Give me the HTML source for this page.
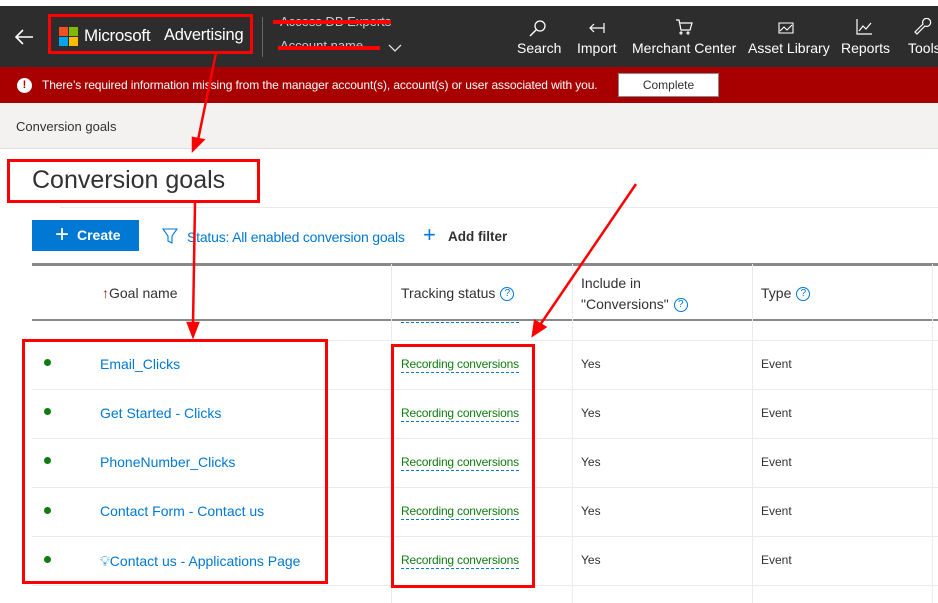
<!DOCTYPE html>
<html><head><meta charset="utf-8"><style>
*{margin:0;padding:0;box-sizing:border-box}
body{width:938px;height:603px;overflow:hidden;background:#fff;font-family:"Liberation Sans",sans-serif;position:relative;color:#323130}
.a{position:absolute}
.hdr{left:0;top:6px;width:938px;height:61px;background:#2d2d2d}
.nav{color:#fff;font-size:14px;text-align:center;top:40px}
.ban{left:0;top:67px;width:938px;height:36px;background:#a80000}
.bc{left:0;top:103px;width:938px;height:46px;background:#f3f2f1;border-bottom:1px solid #e1dfdd}
.hl{height:1px;background:#edebe9;left:32px;width:906px}
.vl{width:1px;background:#edebe9;top:264px;height:339px}
.dot{width:7px;height:7px;border-radius:50%;background:#107c10;left:44px}
.gn{left:100px;color:#0078d4;font-size:14px}
.rc{left:401px;color:#107c10;font-size:12px;border-bottom:1px dashed #0078d4;line-height:15px;letter-spacing:-0.2px}
.yes{left:581px;font-size:12px}
.ev{left:761px;font-size:12px}
.rb{border:3px solid #f00}
.q{display:inline-block;width:14px;height:14px;border:1px solid #0078d4;border-radius:50%;color:#0078d4;font-size:10px;line-height:12px;text-align:center;vertical-align:middle;margin-left:5px}
</style></head><body>
<div class="a hdr"></div>
<svg class="a" style="left:14px;top:28px" width="20" height="18"><path d="M19 9H2M9 2L2 9l7 7" stroke="#fff" stroke-width="1.6" fill="none"/></svg>
<div class="a" style="left:59px;top:27px;width:9px;height:9px;background:#f25022"></div>
<div class="a" style="left:69px;top:27px;width:9px;height:9px;background:#7fba00"></div>
<div class="a" style="left:59px;top:37px;width:9px;height:9px;background:#00a4ef"></div>
<div class="a" style="left:69px;top:37px;width:9px;height:9px;background:#ffb900"></div>
<div class="a" style="left:84px;top:26px;color:#fff;font-size:17px;letter-spacing:-0.3px">Microsoft</div>
<div class="a" style="left:164px;top:26px;color:#fff;font-size:16.5px;letter-spacing:-0.2px">Advertising</div>
<div class="a" style="left:262px;top:17px;width:1px;height:40px;background:#666"></div>
<div class="a" style="left:280px;top:14px;color:#ccc;font-size:13px">Access DB Experts</div>
<div class="a" style="left:273px;top:20px;width:118px;height:4px;background:#f00"></div>
<div class="a" style="left:280px;top:38px;color:#ccc;font-size:13px">Account name</div>
<div class="a" style="left:278px;top:46px;width:102px;height:4px;background:#f00"></div>
<svg class="a" style="left:388px;top:44px" width="14" height="9"><path d="M1 1l6 6 6-6" stroke="#ddd" fill="none" stroke-width="1.3"/></svg>
<svg class="a" style="left:528px;top:19px" width="20" height="18"><circle cx="12" cy="7" r="5" stroke="#fff" fill="none" stroke-width="1.3"/><path d="M8 11l-6 6" stroke="#fff" stroke-width="1.4"/></svg>
<div class="a nav" style="left:517px">Search</div>
<svg class="a" style="left:588px;top:22px" width="20" height="12"><path d="M2 6h14M16 1v10M6 2L2 6l4 4" stroke="#fff" fill="none" stroke-width="1.2"/></svg>
<div class="a nav" style="left:577px">Import</div>
<svg class="a" style="left:674px;top:18px" width="20" height="18"><path d="M2 2h3l2 10h9l2-7H6M8 15a1 1 0 1 0 0 .1M15 15a1 1 0 1 0 0 .1" stroke="#fff" fill="none" stroke-width="1.2"/></svg>
<div class="a nav" style="left:632px">Merchant Center</div>
<svg class="a" style="left:777px;top:20px" width="20" height="16"><path d="M2 3h14v10H2zM3 11l4-4 3 3 5-5" stroke="#fff" fill="none" stroke-width="1.1"/></svg>
<div class="a nav" style="left:748px">Asset Library</div>
<svg class="a" style="left:855px;top:18px" width="18" height="18"><path d="M2 1v15h15M4 13l4-5 3 3 5-6" stroke="#fff" fill="none" stroke-width="1.2"/></svg>
<div class="a nav" style="left:841px">Reports</div>
<svg class="a" style="left:914px;top:18px" width="18" height="18"><path d="M3 16l8-8a4 4 0 1 0 -2-2L1 14z" stroke="#fff" fill="none" stroke-width="1.2"/></svg>
<div class="a nav" style="left:908px">Tools</div>

<div class="a ban"></div>
<div class="a" style="left:17px;top:78px;width:15px;height:15px;border-radius:50%;background:#fff;color:#a80000;font-size:11px;font-weight:bold;text-align:center;line-height:15px">!</div>
<div class="a" style="left:42px;top:78px;color:#fff;font-size:12px;letter-spacing:-0.1px;white-space:nowrap">There’s required information missing from the manager account(s), account(s) or user associated with you.</div>
<div class="a" style="left:618px;top:73px;width:101px;height:24px;background:#fff;border:1px solid #8a8886;font-size:12px;text-align:center;line-height:22px">Complete</div>

<div class="a bc"></div>
<div class="a" style="left:16px;top:119px;font-size:13px">Conversion goals</div>

<div class="a" style="left:32px;top:166px;font-size:25px">Conversion goals</div>
<div class="a hl" style="top:207px;left:60px"></div>
<div class="a" style="left:32px;top:220px;width:107px;height:31px;background:#0078d4;color:#fff;font-size:14px;font-weight:bold;line-height:31px;padding-left:45px">Create</div>
<div class="a" style="left:55px;top:222px;color:#fff;font-size:24px;line-height:26px">+</div>
<svg class="a" style="left:162px;top:228px" width="16" height="17"><path d="M1 1h14l-5 7v7l-4-2V8z" stroke="#0078d4" fill="none" stroke-width="1.1"/></svg>
<div class="a" style="left:187px;top:229px;color:#0078d4;font-size:14px;letter-spacing:-0.2px">Status: All enabled conversion goals</div>
<div class="a" style="left:423px;top:222px;color:#0078d4;font-size:22px;line-height:26px;font-weight:300">+</div>
<div class="a" style="left:448px;top:229px;font-size:13.5px;font-weight:bold">Add filter</div>

<div class="a" style="left:32px;top:263px;width:906px;height:3px;background:#8a8886"></div>
<div class="a" style="left:32px;top:319px;width:906px;height:2px;background:#8a8886"></div>
<div class="a vl" style="left:391px"></div>
<div class="a vl" style="left:572px"></div>
<div class="a vl" style="left:752px"></div>
<div class="a vl" style="left:932px"></div>
<div class="a" style="left:102px;top:285px;font-size:14px"><span style="color:#a4262c">↑</span>Goal name</div>
<div class="a" style="left:401px;top:285px;font-size:14px">Tracking status<span class="q">?</span></div>
<div class="a" style="left:581px;top:273px;font-size:14px;line-height:21px">Include in<br>"Conversions"<span class="q">?</span></div>
<div class="a" style="left:761px;top:285px;font-size:14px">Type<span class="q">?</span></div>
<div class="a" style="left:401px;top:322px;width:118px;border-top:1px dashed #0078d4"></div>

<div class="a hl" style="top:340px"></div>
<div class="a hl" style="top:389px"></div>
<div class="a hl" style="top:438px"></div>
<div class="a hl" style="top:487px"></div>
<div class="a hl" style="top:536px"></div>
<div class="a hl" style="top:585px"></div>

<div class="a dot" style="top:359px"></div><div class="a gn" style="top:356px">Email_Clicks</div>
<div class="a dot" style="top:408px"></div><div class="a gn" style="top:405px">Get Started - Clicks</div>
<div class="a dot" style="top:457px"></div><div class="a gn" style="top:454px">PhoneNumber_Clicks</div>
<div class="a dot" style="top:507px"></div><div class="a gn" style="top:503px">Contact Form - Contact us</div>
<div class="a dot" style="top:556px"></div><div class="a gn" style="top:553px">💡︎Contact us - Applications Page</div>

<div class="a rc" style="top:357px">Recording conversions</div><div class="a yes" style="top:357px">Yes</div><div class="a ev" style="top:357px">Event</div>
<div class="a rc" style="top:406px">Recording conversions</div><div class="a yes" style="top:406px">Yes</div><div class="a ev" style="top:406px">Event</div>
<div class="a rc" style="top:455px">Recording conversions</div><div class="a yes" style="top:455px">Yes</div><div class="a ev" style="top:455px">Event</div>
<div class="a rc" style="top:504px">Recording conversions</div><div class="a yes" style="top:504px">Yes</div><div class="a ev" style="top:504px">Event</div>
<div class="a rc" style="top:553px">Recording conversions</div><div class="a yes" style="top:553px">Yes</div><div class="a ev" style="top:553px">Event</div>

<div class="a rb" style="left:48px;top:14px;width:205px;height:40px"></div>
<div class="a rb" style="left:7px;top:159px;width:253px;height:44px"></div>
<div class="a rb" style="left:22px;top:339px;width:306px;height:245px"></div>
<div class="a rb" style="left:391px;top:344px;width:144px;height:244px"></div>
<svg class="a" style="left:0;top:0" width="938" height="603">
<g stroke="#f00" stroke-width="2.5" fill="#f00">
<line x1="216" y1="53" x2="198" y2="140"/><polygon points="193,150 193,138 203,140" />
<line x1="195" y1="203" x2="193" y2="325"/><polygon points="193,336 188,323 198,323"/>
<line x1="636" y1="184" x2="540" y2="325"/><polygon points="533,335 535,321 545,327"/>
</g></svg>
</body></html>
